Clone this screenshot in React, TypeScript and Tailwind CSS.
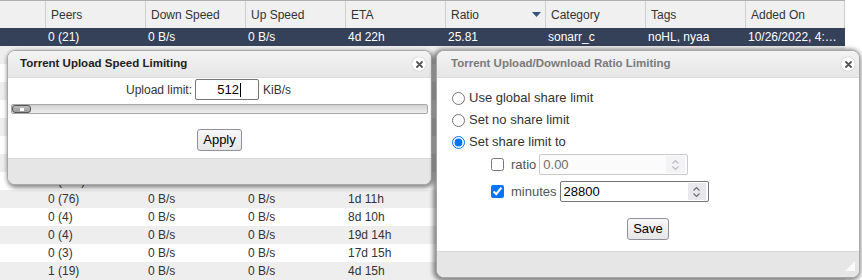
import React from 'react'

const columns = ['Peers', 'Down Speed', 'Up Speed', 'ETA', 'Ratio', 'Category', 'Tags', 'Added On']

// rows 2-7 and the right half of the lower rows sit under the dialogs, so they stay empty
const rows: string[][] = [
  ['0 (21)', '0 B/s', '0 B/s', '4d 22h', '25.81', 'sonarr_c', 'noHL, nyaa', '10/26/2022, 4:…'],
  ['1 (19)', '0 B/s', '0 B/s', '10d 20h', '14.54', 'sonarr_c', 'noHL', '11/1/2022, 0:0…'],
  [], [], [], [], [], [],
  ['0 (115)', '0 B/s', '0 B/s', '3d 9h'],
  ['0 (76)', '0 B/s', '0 B/s', '1d 11h'],
  ['0 (4)', '0 B/s', '0 B/s', '8d 10h'],
  ['0 (4)', '0 B/s', '0 B/s', '19d 14h'],
  ['0 (3)', '0 B/s', '0 B/s', '17d 15h'],
  ['1 (19)', '0 B/s', '0 B/s', '4d 15h'],
]

const CloseButton = () => (
  <div className="flex h-[14px] w-[14px] items-center justify-center rounded-full bg-white shadow-[0_0_1px_rgba(0,0,0,0.4)]">
    <svg width="7" height="7" viewBox="0 0 7 7">
      <path d="M1 1 L6 6 M6 1 L1 6" stroke="#555" strokeWidth="1.8" strokeLinecap="round" />
    </svg>
  </div>
)

const Spinner = ({ color }: { color: string }) => (
  <svg width="9" height="14" viewBox="0 0 9 14">
    <polyline points="1.5,5.5 4.5,2.5 7.5,5.5" fill="none" stroke={color} strokeWidth="1.1" />
    <polyline points="1.5,8.5 4.5,11.5 7.5,8.5" fill="none" stroke={color} strokeWidth="1.1" />
  </svg>
)

const Button = ({ label }: { label: string }) => (
  <div className="flex h-[22px] items-center rounded-[3px] border border-[#8f8f9d] bg-linear-to-b from-[#f7f7f7] to-[#e6e6e6] px-[5px] text-[13px] text-black">
    {label}
  </div>
)

export default function App() {
  return (
    <div className="relative h-[280px] w-[862px] overflow-hidden bg-white font-['Liberation_Sans',Arial,sans-serif] text-[12px] text-[#333]">
      {/* Torrent table */}
      <div className="flex w-[845px] flex-col">
        <div className="flex h-[28px] border-t border-[#b0b0b0] bg-[#f0f0f0]">
          <div className="w-[45px]" />
          {columns.map((col, i) => (
            <div
              key={col}
              className={`flex w-[100px] items-center justify-between border-l border-[#cfcfcf] pl-[5px] pr-[4px] ${i === columns.length - 1 ? 'border-r' : ''}`}
            >
              <span>{col}</span>
              {col === 'Ratio' && (
                <svg width="9" height="5" viewBox="0 0 9 5">
                  <polygon points="0,0 9,0 4.5,5" fill="#36527a" />
                </svg>
              )}
            </div>
          ))}
        </div>
        {rows.map((row, k) => (
          <div
            key={k}
            className={`flex h-[18px] items-center ${k === 0 ? 'bg-[#354158] text-white' : k % 2 === 1 ? 'bg-[#eeeeee]' : 'bg-white'}`}
          >
            <div className="w-[45px]" />
            {row.map((cell, i) => (
              <div key={i} className="w-[100px] overflow-hidden whitespace-nowrap px-[3px]">
                {cell}
              </div>
            ))}
          </div>
        ))}
      </div>

      {/* Upload speed dialog */}
      <div className="absolute left-[7px] top-[50px] flex h-[135px] w-[425px] flex-col overflow-hidden rounded-[8px] border border-[#a8a8a8] bg-white shadow-[1px_2px_4px_1px_rgba(0,0,0,0.45)]">
        <div className="flex h-[27px] shrink-0 items-center justify-between border-b border-[#dcdcdc] bg-linear-to-b from-[#f3f3f3] to-[#e6e6e6] pl-[12px] pr-[5px]">
          <span className="text-[11.5px] font-bold text-[#222]">Torrent Upload Speed Limiting</span>
          <CloseButton />
        </div>
        <div className="flex flex-1 flex-col">
          <div className="mt-[1px] flex items-center justify-center pr-[22px]">
            <span>Upload limit:</span>
            <div className="ml-[3px] flex h-[21px] w-[64px] items-center justify-end rounded-[2px] border border-[#767676] pr-[17px] text-[13px] text-black">
              512
              <span className="ml-px h-[14px] w-px bg-black" />
            </div>
            <span className="ml-[4px]">KiB/s</span>
          </div>
          <div className="mx-[3px] mt-[4px] flex h-[10px] items-stretch rounded-[2px] border border-[#a8a8a8] bg-linear-to-b from-[#d2d2d2] to-[#eeeeee]">
            <div className="flex w-[19px] items-center justify-center rounded-[3px] border border-[#555] bg-linear-to-b from-[#bdbdbd] to-[#9c9c9c]">
              <div className="h-[3px] w-[4px] bg-white" />
            </div>
          </div>
          <div className="mt-[15px] flex justify-center">
            <Button label="Apply" />
          </div>
        </div>
        <div className="h-[26px] shrink-0 border-t border-[#d8d8d8] bg-[#e6e6e6]" />
      </div>

      {/* Ratio limiting dialog */}
      <div className="absolute left-[436px] top-[50px] flex h-[228px] w-[424px] flex-col overflow-hidden rounded-[8px] border border-[#a8a8a8] bg-white shadow-[-1px_1px_4px_2px_rgba(0,0,0,0.45)]">
        <div className="flex h-[27px] shrink-0 items-center justify-between border-b border-[#dcdcdc] bg-linear-to-b from-[#f3f3f3] to-[#e6e6e6] pl-[14px] pr-[4px]">
          <span className="text-[11.5px] font-bold text-[#7a7a7a]">Torrent Upload/Download Ratio Limiting</span>
          <CloseButton />
        </div>
        <div className="flex flex-1 flex-col pt-[9px] text-[13px]">
          {['Use global share limit', 'Set no share limit', 'Set share limit to'].map((label, i) => (
            <label key={label} className="flex h-[22px] items-center pl-[15px] text-[#333]">
              <input type="radio" name="share" defaultChecked={i === 2} className="m-0 h-[13px] w-[13px]" />
              <span className="ml-[4px]">{label}</span>
            </label>
          ))}
          <div className="mt-px flex h-[21px] items-center pl-[54px]">
            <input type="checkbox" className="m-0 h-[13px] w-[13px]" />
            <span className="ml-[7px] text-[#555]">ratio</span>
            <div className="ml-[3px] flex h-[21px] w-[149px] items-center justify-between rounded-[2px] border border-[#cacaca] bg-[#fbfbfb] pl-[3px] pr-[2px] text-[#6d6d6d]">
              <span>0.00</span>
              <div className="flex h-[17px] w-[19px] items-center justify-center bg-[#f3f3f6]">
                <Spinner color="#b8b8c0" />
              </div>
            </div>
          </div>
          <div className="mt-[6px] flex h-[21px] items-center pl-[54px]">
            <input type="checkbox" defaultChecked className="m-0 h-[13px] w-[13px]" />
            <span className="ml-[7px] text-[#555]">minutes</span>
            <div className="ml-[3px] flex h-[21px] w-[149px] items-center justify-between rounded-[2px] border border-[#767676] bg-white pl-[3px] pr-[2px] text-black">
              <span>28800</span>
              <div className="flex h-[17px] w-[18px] items-center justify-center bg-[#e9e9ed]">
                <Spinner color="#6a6a6a" />
              </div>
            </div>
          </div>
          <div className="mt-[16px] flex justify-center">
            <Button label="Save" />
          </div>
        </div>
        <div className="flex h-[26px] shrink-0 items-end justify-end border-t border-[#d8d8d8] bg-[#e6e6e6] pb-[6px] pr-[4px]">
          <svg width="10" height="10" viewBox="0 0 10 10">
            <polygon points="10,0 10,10 0,10" fill="#fafafa" />
          </svg>
        </div>
      </div>
    </div>
  )
}
